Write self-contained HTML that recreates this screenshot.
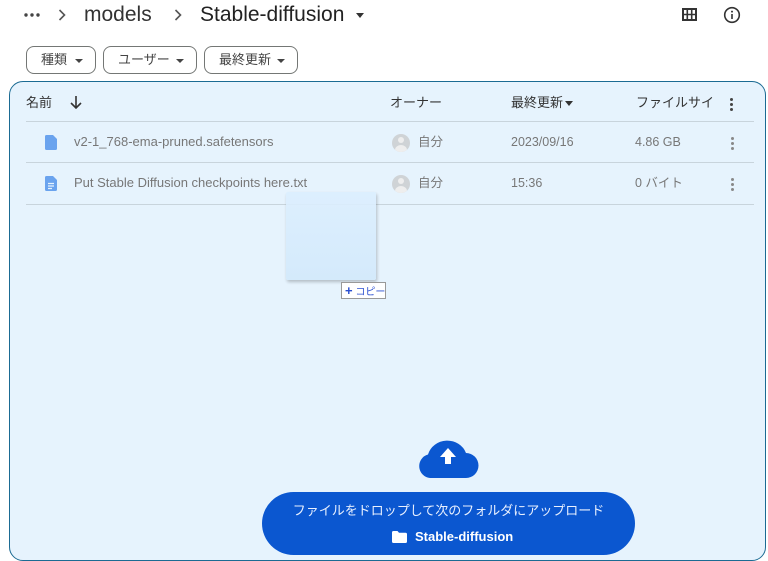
<!DOCTYPE html>
<html><head><meta charset="utf-8"><style>
*{box-sizing:border-box;margin:0;padding:0}
body{width:768px;height:560px;overflow:hidden;background:#fff;font-family:"Liberation Sans","Noto Sans CJK JP",sans-serif;position:relative;color:#1f1f1f}
.a{position:absolute;white-space:nowrap;line-height:16px}
.chip{position:absolute;top:46px;height:28px;border:1px solid #747775;border-radius:8px;font-size:13px;color:#444;padding:0 0 0 14px;line-height:26px}
.chip:after{content:"";position:absolute;right:12px;top:12px;border:4px solid transparent;border-top:4px solid #444}
.panel{position:absolute;left:9px;top:81px;width:757px;height:480px;background:#e6f3fd;border:1.5px solid #1b6b93;border-radius:14px}
.hl{position:absolute;left:26px;width:728px;height:1px;background:#c8d4dc}
.g{color:#777;font-size:12.5px}
.dots{position:absolute;width:3px}
.dots i{display:block;width:3px;height:3px;border-radius:50%;background:#444;margin-bottom:2px}
.av{position:absolute;width:18px;height:18px;border-radius:50%;background:#cfd3d6;overflow:hidden}
.av:before{content:"";position:absolute;left:6px;top:3px;width:6px;height:6px;border-radius:50%;background:#eee}
.av:after{content:"";position:absolute;left:3px;top:11px;width:12px;height:10px;border-radius:50%;background:#eee}
</style></head><body>
<svg class="a" style="left:24px;top:13px" width="16" height="4"><circle cx="2" cy="2" r="1.7" fill="#444"/><circle cx="8" cy="2" r="1.7" fill="#444"/><circle cx="14" cy="2" r="1.7" fill="#444"/></svg>
<svg class="a" style="left:58px;top:9px" width="8" height="12"><path d="M1.5 1L6.5 6L1.5 11" fill="none" stroke="#555" stroke-width="1.6"/></svg>
<div class="a" style="left:84px;top:4px;font-size:21px;line-height:22px;color:#333">models</div>
<svg class="a" style="left:174px;top:9px" width="8" height="12"><path d="M1.5 1L6.5 6L1.5 11" fill="none" stroke="#555" stroke-width="1.6"/></svg>
<div class="a" style="left:200px;top:4px;font-size:21px;line-height:22px;color:#222">Stable-diffusion</div>
<div class="a" style="left:356px;top:13px;border:4.5px solid transparent;border-top:5px solid #333"></div>
<svg class="a" style="left:682px;top:8px" width="15" height="13" viewBox="0 0 15 13"><rect x="1" y="1" width="13" height="11" fill="none" stroke="#333" stroke-width="2"/><path d="M1 6.5H14M5.3 1V12M9.7 1V12" stroke="#333" stroke-width="1.6"/></svg>
<svg class="a" style="left:723px;top:6px" width="18" height="18" viewBox="0 0 18 18"><circle cx="9" cy="9" r="7.3" fill="none" stroke="#333" stroke-width="1.6"/><rect x="8.2" y="8" width="1.6" height="5" fill="#333"/><circle cx="9" cy="5.6" r="1" fill="#333"/></svg>
<div class="chip" style="left:26px;width:70px">種類</div>
<div class="chip" style="left:103px;width:94px">ユーザー</div>
<div class="chip" style="left:204px;width:94px">最終更新</div>
<div class="panel"></div>
<div class="a" style="left:26px;top:95px;font-size:13px;color:#333">名前</div>
<svg class="a" style="left:70px;top:96px" width="12" height="13"><path d="M6 0V12M1 7L6 12L11 7" fill="none" stroke="#333" stroke-width="1.6"/></svg>
<div class="a" style="left:390px;top:95px;font-size:13px;color:#333">オーナー</div>
<div class="a" style="left:511px;top:95px;font-size:13px;color:#333">最終更新</div>
<div class="a" style="left:565px;top:101px;border:4px solid transparent;border-top:5px solid #333"></div>
<div class="a" style="left:636px;top:95px;font-size:13px;color:#333">ファイルサイ</div>
<div class="dots" style="left:730px;top:98px"><i></i><i></i><i></i></div>
<div class="hl" style="top:121px"></div>
<div class="hl" style="top:162px"></div>
<div class="hl" style="top:204px"></div>
<svg class="a" style="left:45px;top:135px" width="12" height="15" viewBox="0 0 12 15"><path d="M1.5 0H8L12 4V13.5A1.5 1.5 0 0 1 10.5 15H1.5A1.5 1.5 0 0 1 0 13.5V1.5A1.5 1.5 0 0 1 1.5 0Z" fill="#6aa3ee"/></svg>
<div class="a g" style="left:74px;top:134px;font-size:13px">v2-1_768-ema-pruned.safetensors</div>
<div class="av" style="left:392px;top:134px"></div><div class="a g" style="left:418px;top:134px">自分</div>
<div class="a g" style="left:511px;top:134px">2023/09/16</div>
<div class="a g" style="left:635px;top:134px">4.86 GB</div>
<div class="dots" style="left:731px;top:137px"><i style="background:#888"></i><i style="background:#888"></i><i style="background:#888"></i></div>
<svg class="a" style="left:45px;top:176px" width="12" height="15" viewBox="0 0 12 15"><path d="M1.5 0H8L12 4V13.5A1.5 1.5 0 0 1 10.5 15H1.5A1.5 1.5 0 0 1 0 13.5V1.5A1.5 1.5 0 0 1 1.5 0Z" fill="#6aa3ee"/><path d="M3 7.5H9M3 10H9M3 12.5H7" stroke="#e6f3fd" stroke-width="1.2"/></svg>
<div class="a g" style="left:74px;top:175px;font-size:13px">Put Stable Diffusion checkpoints here.txt</div>
<div class="av" style="left:392px;top:175px"></div><div class="a g" style="left:418px;top:175px">自分</div>
<div class="a g" style="left:511px;top:175px">15:36</div>
<div class="a g" style="left:635px;top:175px">0 バイト</div>
<div class="dots" style="left:731px;top:178px"><i style="background:#888"></i><i style="background:#888"></i><i style="background:#888"></i></div>
<div class="a" style="left:286px;top:192px;width:90px;height:88px;background:linear-gradient(#dcefff,#d3eafb);border-radius:2px;box-shadow:1px 2px 3px rgba(0,0,0,.25);opacity:.9"></div>
<div class="a" style="left:341px;top:282px;width:45px;height:17px;background:#fff;border:1px solid #999;font-size:10px;line-height:15px;color:#2a4fd0;padding:0 0 0 3px"><b style="font-size:13px">+</b> コピー</div>
<svg class="a" style="left:416px;top:436px" width="64" height="42" viewBox="0 0 64 42"><path d="M14 42A12 12 0 0 1 12 18.5A20 19 0 0 1 50 17A12.5 12.5 0 0 1 50 42Z" fill="#0b57d0"/><path d="M32 12L24 21H29V28H35V21H40Z" fill="#fff"/></svg>
<div class="a" style="left:262px;top:492px;width:373px;height:63px;background:#0b57d0;border-radius:32px"></div>
<div class="a" style="left:262px;top:503px;width:373px;text-align:center;color:#e8f0ff;font-size:13px">ファイルをドロップして次のフォルダにアップロード</div>
<svg class="a" style="left:392px;top:531px" width="15" height="12" viewBox="0 0 15 12"><path d="M0 1.5A1.5 1.5 0 0 1 1.5 0H5.5L7 1.8H13.5A1.5 1.5 0 0 1 15 3.3V10.5A1.5 1.5 0 0 1 13.5 12H1.5A1.5 1.5 0 0 1 0 10.5Z" fill="#fff"/></svg>
<div class="a" style="left:415px;top:529px;color:#fff;font-size:13px;font-weight:bold">Stable-diffusion</div>
</body></html>
